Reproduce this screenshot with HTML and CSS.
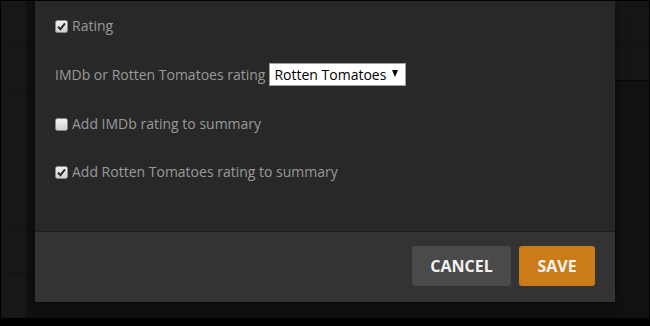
FILE: index.html
```html
<!DOCTYPE html>
<html>
<head>
<meta charset="utf-8">
<link rel="stylesheet" href="styles.css">
</head>
<body>
<div class="screen">
  <aside class="sidebar">
    <div class="side-item h42"></div>
    <div class="side-item h47"></div>
    <div class="side-item h138"></div>
    <div class="side-item h45"></div>
  </aside>
  <div class="gutter"></div>
  <div class="dialog">
    <div class="dialog-body">
      <label class="row">
        <svg class="cb" width="13" height="13" viewBox="0 0 13 13"><defs><linearGradient id="g1" x1="0" y1="0" x2="0" y2="1"><stop offset="0" stop-color="#f4f4f4"/><stop offset="1" stop-color="#cfcfcf"/></linearGradient></defs><rect x="0.5" y="0.5" width="12" height="12" rx="2" fill="url(#g1)" stroke="#8a8a8a"/><path d="M3 6.6 L5.4 9.2 L10 3.4" fill="none" stroke="#2a2a2a" stroke-width="2"/></svg>
        <span>Rating</span>
      </label>
      <div class="row row-select">
        <span>IMDb or Rotten Tomatoes rating</span>
        <span class="select"><span class="select-text">Rotten Tomatoes</span><svg class="arrow" width="6" height="7" viewBox="0 0 6 7"><polygon points="0,0 6,0 3,7" fill="#000"/></svg></span>
      </div>
      <label class="row row-gap">
        <svg class="cb" width="13" height="13" viewBox="0 0 13 13"><defs><linearGradient id="g2" x1="0" y1="0" x2="0" y2="1"><stop offset="0" stop-color="#f4f4f4"/><stop offset="1" stop-color="#cfcfcf"/></linearGradient></defs><rect x="0.5" y="0.5" width="12" height="12" rx="2" fill="url(#g2)" stroke="#8a8a8a"/></svg>
        <span>Add IMDb rating to summary</span>
      </label>
      <label class="row row-gap">
        <svg class="cb" width="13" height="13" viewBox="0 0 13 13"><defs><linearGradient id="g3" x1="0" y1="0" x2="0" y2="1"><stop offset="0" stop-color="#f4f4f4"/><stop offset="1" stop-color="#cfcfcf"/></linearGradient></defs><rect x="0.5" y="0.5" width="12" height="12" rx="2" fill="url(#g3)" stroke="#8a8a8a"/><path d="M3 6.6 L5.4 9.2 L10 3.4" fill="none" stroke="#2a2a2a" stroke-width="2"/></svg>
        <span>Add Rotten Tomatoes rating to summary</span>
      </label>
    </div>
    <div class="dialog-footer">
      <button class="btn btn-cancel">Cancel</button>
      <button class="btn btn-save">Save</button>
    </div>
  </div>
  <div class="rightpane">
    <div class="rp-top">
      <div class="rp-line a"></div>
      <div class="rp-line b"></div>
    </div>
  </div>
</div>
</body>
</html>
```
FILE: styles.css
```css
html, body {
  margin: 0;
  padding: 0;
  background: #000;
}
body {
  width: 650px;
  height: 326px;
  overflow: hidden;
  font-family: "Open Sans", "Liberation Sans", sans-serif;
}
.screen {
  width: 648px;
  height: 317px;
  margin: 1px 1px 0 1px;
  background: #101010;
  display: flex;
  align-items: flex-start;
  overflow: hidden;
}
.sidebar {
  width: 25px;
  height: 317px;
  background: #171717;
  display: flex;
  flex-direction: column;
  flex: none;
}
.side-item {
  border-bottom: 1px solid #121212;
}
.h42 { height: 41px; }
.h47 { height: 46px; }
.h138 { height: 137px; }
.h45 { height: 44px; }
.gutter {
  width: 9px;
  flex: none;
}
.dialog {
  width: 580px;
  height: 301px;
  flex: none;
  display: flex;
  flex-direction: column;
  box-shadow: 0 0 8px rgba(0, 0, 0, 0.55);
  position: relative;
  z-index: 1;
}
.dialog-body {
  flex: 1;
  background: #282828;
  padding: 15px 20px 0 20px;
  display: flex;
  flex-direction: column;
  color: #9a9a9a;
  font-size: 14px;
  line-height: 20px;
}
.row {
  display: flex;
  align-items: center;
  height: 20px;
}
.cb {
  display: block;
  margin-right: 4px;
  flex: none;
}
.row-select {
  height: 23px;
  margin-top: 27px;
}
.row-gap {
  margin-top: 28px;
}
.select {
  margin-left: 4px;
  width: 137px;
  height: 23px;
  box-sizing: border-box;
  background: #fff;
  border: 1px solid #a0a0a0;
  display: flex;
  align-items: center;
  padding: 0 7px 0 4px;
  color: #000;
  font-size: 14px;
}
.select-text {
  flex: 1;
}
.arrow {
  display: block;
  margin-top: -2px;
}
.dialog-footer {
  height: 71px;
  flex: none;
  box-sizing: border-box;
  background: #333333;
  border-top: 1px solid #1e1e1e;
  padding: 14px 20px 16px 0;
  display: flex;
  justify-content: flex-end;
  gap: 8px;
}
.btn {
  height: 40px;
  border: none;
  border-radius: 3px;
  font-family: "Open Sans", "Liberation Sans", sans-serif;
  font-weight: 700;
  font-size: 16px;
  text-transform: uppercase;
  color: #f2f2f2;
  padding: 0;
}
.btn-cancel {
  width: 99px;
  background: #4a4a4a;
}
.btn-save {
  width: 76px;
  background: #cc7b19;
}
.rightpane {
  width: 34px;
  height: 317px;
  flex: none;
  background: #111111;
}
.rp-top {
  height: 80px;
  background: #151515;
  border-bottom: 1px solid #0a0a0a;
  padding-top: 9px;
  box-sizing: border-box;
}
.rp-line.a {
  height: 35px;
  border-top: 1px solid #1a1a1a;
  border-bottom: 1px solid #121212;
}
```
